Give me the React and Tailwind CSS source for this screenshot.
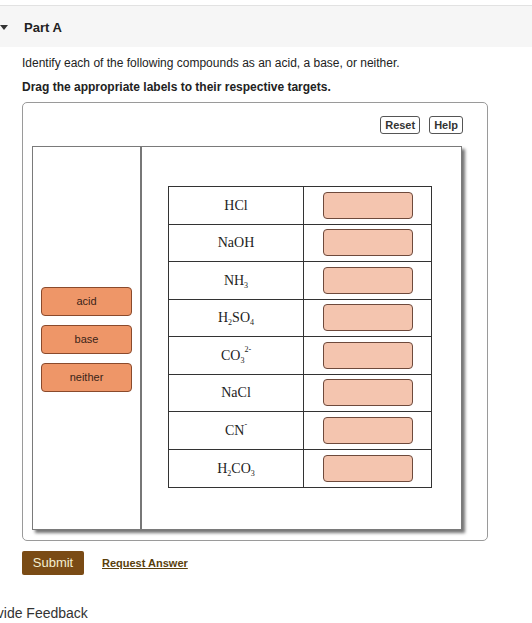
import React from 'react';

const compounds = [
  { base: 'HCl' },
  { base: 'NaOH' },
  { base: 'NH', sub: '3' },
  { base: 'H', sub: '2', rest: 'SO', sub2: '4' },
  { base: 'CO', sub: '3', sup: '2-' },
  { base: 'NaCl' },
  { base: 'CN', sup: '-' },
  { base: 'H', sub: '2', rest: 'CO', sub2: '3' },
];

const Formula = ({ c }) => (
  <span className="font-['Liberation_Serif',serif] text-[14px] text-[#222]">
    {c.base}
    {c.sub && <sub className="text-[8px] align-[-1px]">{c.sub}</sub>}
    {c.rest}
    {c.sub2 && <sub className="text-[8px] align-[-1px]">{c.sub2}</sub>}
    {c.sup && <sup className="text-[8px] align-[4px]">{c.sup}</sup>}
  </span>
);

const App = () => {
  return (
    <div className="w-[532px] h-[623px] overflow-hidden bg-white font-['Liberation_Sans',Arial,sans-serif] text-[#222]">
      {/* Part A header */}
      <div className="mt-[5px] h-[42px] pt-[2px] border-t border-[#e2e2e2] bg-[#f6f6f6] flex items-center">
        <span className="w-0 h-0 border-l-[4px] border-r-[4px] border-t-[5px] border-l-transparent border-r-transparent border-t-[#333]" />
        <span className="ml-[16px] text-[13px] font-bold">Part A</span>
      </div>

      <div className="px-[22px]">
        <p className="mt-[9px] text-[12px] leading-[14px]">
          Identify each of the following compounds as an acid, a base, or neither.
        </p>
        <p className="mt-[10px] text-[12px] leading-[14px] font-bold">
          Drag the appropriate labels to their respective targets.
        </p>

        {/* Outer box */}
        <div className="mt-[8px] w-[466px] h-[439px] border border-[#9a9a9a] rounded-[5px]">
          <div className="pt-[13px] pr-[24px] flex justify-end gap-[9px]">
            <button className="h-[18px] px-[4px] border border-[#555] rounded-[3px] bg-white text-[11px] font-bold leading-[16px] text-[#333]">
              Reset
            </button>
            <button className="h-[18px] px-[4px] border border-[#555] rounded-[3px] bg-white text-[11px] font-bold leading-[16px] text-[#333]">
              Help
            </button>
          </div>

          {/* Inner area */}
          <div className="mt-[12px] ml-[9px] w-[430px] h-[384px] flex border border-[#7a7a7a] shadow-[3px_3px_3px_rgba(0,0,0,0.55)] bg-white">
            <div className="w-[109px] border-r-2 border-[#777] flex flex-col justify-center gap-[9px] pl-[8px] pt-[2px]">
              {['acid', 'base', 'neither'].map((l) => (
                <div
                  key={l}
                  className="w-[91px] h-[29px] bg-[#ee9668] border border-[#8a4a2c] rounded-[4px] flex items-center justify-center text-[11px] text-[#3a2418]"
                >
                  {l}
                </div>
              ))}
            </div>

            <div className="flex-1 pl-[26px] pt-[39px]">
              <div className="w-[264px] border border-[#333]">
                {compounds.map((c, i) => (
                  <div
                    key={i}
                    className={`flex h-[37.5px] ${i < compounds.length - 1 ? 'border-b border-[#333]' : ''}`}
                  >
                    <div className="w-[135px] border-r border-[#333] flex items-center justify-center">
                      <Formula c={c} />
                    </div>
                    <div className="flex-1 flex items-center justify-center">
                      <div className="w-[90px] h-[27px] bg-[#f4c5af] border border-[#6e4a3c] rounded-[4px]" />
                    </div>
                  </div>
                ))}
              </div>
            </div>
          </div>
        </div>

        <div className="mt-[10px] flex items-center gap-[18px]">
          <button className="w-[62px] h-[24px] bg-[#7a4b15] rounded-[2px] text-[13px] text-[#f4efd2]">
            Submit
          </button>
          <a className="text-[11px] font-bold underline text-[#5a3f0c]">Request Answer</a>
        </div>

        <div className="mt-[31px] -ml-[47px] text-[14px] leading-[15px] text-[#333]">Provide Feedback</div>
      </div>
    </div>
  );
};

export default App;
